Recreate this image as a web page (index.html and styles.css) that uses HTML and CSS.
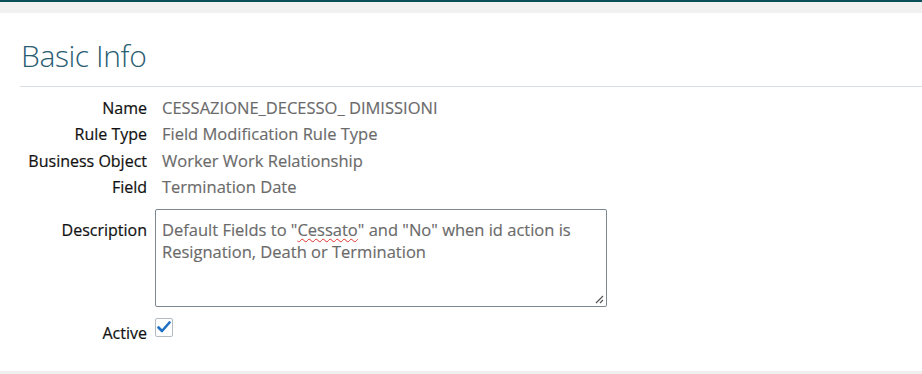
FILE: index.html
```html
<!DOCTYPE html>
<html>
<head>
<meta charset="utf-8">
<link rel="stylesheet" href="styles.css">
</head>
<body>
<div class="topbar"></div>
<main class="panel">
  <h1 class="title">Basic Info</h1>
  <div class="form">
    <div class="label">Name</div>
    <div class="value">CESSAZIONE_DECESSO_ DIMISSIONI</div>
    <div class="label">Rule Type</div>
    <div class="value">Field Modification Rule Type</div>
    <div class="label">Business Object</div>
    <div class="value">Worker Work Relationship</div>
    <div class="label">Field</div>
    <div class="value">Termination Date</div>

    <div class="label label-desc">Description</div>
    <div class="textarea">Default Fields to "<span class="misspelled">Cessato</span>" and "No" when id action is Resignation, Death or Termination<svg class="grip" width="10" height="10" viewBox="0 0 10 10"><path d="M9 2 L2 9 M9 6 L6 9" stroke="#555" stroke-width="1.2" fill="none"/></svg></div>

    <div class="label label-active">Active</div>
    <div class="check-cell">
      <span class="checkbox"><svg width="14" height="12" viewBox="0 0 14 12"><path d="M1.5 6.5 L5 10 L12.5 1.5" stroke="#1f6fc5" stroke-width="2.6" fill="none" stroke-linecap="round" stroke-linejoin="round"/></svg></span>
    </div>
  </div>
</main>
<div class="bottombar"></div>
</body>
</html>
```
FILE: styles.css
```css
html, body {
  margin: 0;
  padding: 0;
  background: #ffffff;
  font-family: "Open Sans", "Noto Sans", sans-serif;
}
.topbar {
  height: 11px;
  border-top: 2px solid #0d4f58;
  background: #f1f1f1;
}
.panel {
  padding: 0 0 0 20px;
  height: 358px;
  box-sizing: border-box;
}
.title {
  margin: 0;
  padding: 24px 0 11px 1px;
  font-size: 30px;
  font-weight: 300;
  line-height: 38px;
  letter-spacing: -0.4px;
  color: #2a5d72;
  border-bottom: 1px solid #d7dfe4;
}
.form {
  display: grid;
  grid-template-columns: 127px 1fr;
  column-gap: 8px;
  padding-top: 8px;
  line-height: 26.4px;
}
.label {
  text-align: right;
  color: #111111;
  font-size: 16px;
  -webkit-text-stroke: 0.2px #111111;
}
.value {
  color: #6a6a6a;
  font-size: 16.5px;
  padding-left: 7px;
  -webkit-text-stroke: 0.15px #6a6a6a;
}
.label-desc {
  margin-top: 16px;
}
.textarea {
  position: relative;
  margin-top: 8px;
  width: 452px;
  height: 98px;
  box-sizing: border-box;
  border: 1px solid #7b8891;
  border-radius: 2px;
  padding: 9px 6px 6px;
  color: #6a6a6a;
  line-height: 22px;
  font-size: 16.5px;
  -webkit-text-stroke: 0.15px #6a6a6a;
}
.misspelled {
  text-decoration: underline wavy #e0302b;
  text-decoration-thickness: 1px;
  text-underline-offset: 2px;
}
.grip {
  position: absolute;
  right: 2px;
  bottom: 2px;
}
.label-active {
  margin-top: 13px;
}
.check-cell {
  margin-top: 11px;
  display: flex;
  align-items: flex-start;
}
.checkbox {
  width: 18px;
  height: 19px;
  box-sizing: border-box;
  border: 1px solid #b3bcc3;
  border-radius: 2px;
  background: #fff;
  display: flex;
  align-items: center;
  justify-content: center;
}
.bottombar {
  height: 3px;
  background: #f0f0f0;
}
```
